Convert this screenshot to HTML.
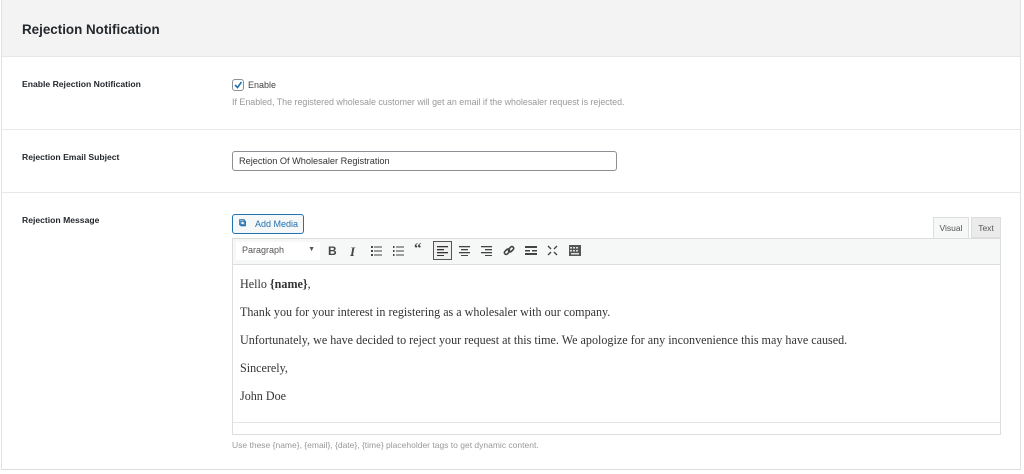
<!DOCTYPE html><html><head><style>
*{margin:0;padding:0;box-sizing:border-box}
body{width:1024px;height:474px;background:#fff;font-family:"Liberation Sans",sans-serif;position:relative;overflow:hidden}
.a{position:absolute}
.lbl{font-size:8.6px;font-weight:bold;color:#23282d;left:22px}
.ser{font-family:"Liberation Serif",serif;font-size:12.1px;color:#333;left:240px}
.ic{position:absolute;top:244px;font-size:11px;color:#444;font-weight:bold}
svg.t{position:absolute;top:245px}
</style></head><body>
<div class="a" style="left:1px;top:0;width:1020px;height:470px;border-left:1px solid #e2e2e2;border-right:1px solid #e2e2e2;border-bottom:1px solid #ddd"></div>
<div class="a" style="left:2px;top:0;width:1018px;height:57px;background:#f3f3f3;border-bottom:1px solid #e6e6e6"></div>
<div class="a" style="left:22px;top:22px;font-size:13.4px;font-weight:bold;color:#23282d">Rejection Notification</div>
<div class="a lbl" style="top:79px">Enable Rejection Notification</div>
<div class="a" style="left:232px;top:79px;width:12px;height:12px;border:1px solid #8c8f94;border-radius:3px;background:#fff"><svg width="10" height="10" style="position:absolute;left:0;top:0"><path d="M2 5 L4.5 7.5 L8.5 2" stroke="#2271b1" stroke-width="1.6" fill="none"/></svg></div>
<div class="a" style="left:248px;top:80px;font-size:9px;color:#444">Enable</div>
<div class="a" style="left:232px;top:97px;font-size:8.9px;color:#999">If Enabled, The registered wholesale customer will get an email if the wholesaler request is rejected.</div>
<div class="a" style="left:2px;top:129px;width:1018px;height:1px;background:#e8e8e8"></div>
<div class="a lbl" style="top:152px">Rejection Email Subject</div>
<div class="a" style="left:232px;top:151px;width:385px;height:20px;border:1px solid #8c8f94;border-radius:3px;font-size:9.2px;color:#333;padding:4px 6px">Rejection Of Wholesaler Registration</div>
<div class="a" style="left:2px;top:192px;width:1018px;height:1px;background:#e8e8e8"></div>
<div class="a lbl" style="top:215px">Rejection Message</div>
<div class="a" style="left:232px;top:214px;width:72px;height:20px;border:1px solid #2271b1;border-radius:3px;background:#f6f7f7;font-size:9px;color:#2271b1;padding:4px 0 0 22px"><span style="position:absolute;left:6px;top:3px;font-size:10px;font-weight:bold">⧉</span>Add Media</div>
<div class="a" style="left:933px;top:217px;width:36px;height:22px;background:#f6f7f7;border:1px solid #ddd;border-bottom:none;font-size:8.5px;color:#555;text-align:center;padding-top:5px">Visual</div>
<div class="a" style="left:971px;top:217px;width:30px;height:21px;background:#ebebeb;border:1px solid #ddd;font-size:8.5px;color:#555;text-align:center;padding-top:5px">Text</div>
<div class="a" style="left:232px;top:238px;width:769px;height:197px;border:1px solid #ddd"></div>
<div class="a" style="left:233px;top:239px;width:767px;height:26px;background:#f6f7f7;border-bottom:1px solid #ddd"></div>
<div class="a" style="left:236px;top:242px;width:84px;height:18px;background:#fff;font-size:9px;color:#555;padding:3px 6px">Paragraph<span style="position:absolute;right:5px;top:4px;font-size:7px">▼</span></div>
<div class="ic" style="left:328px;font-size:12px">B</div>
<div class="ic" style="left:350px;font-style:italic;font-family:'Liberation Serif',serif;font-size:13px">I</div>
<svg class="t" style="left:371px" width="11" height="11"><g fill="#444"><rect x="0" y="1" width="2" height="2"/><rect x="0" y="5" width="2" height="2"/><rect x="0" y="9" width="2" height="2"/><rect x="3" y="1.5" width="8" height="1"/><rect x="3" y="5.5" width="8" height="1"/><rect x="3" y="9.5" width="8" height="1"/></g></svg>
<svg class="t" style="left:393px" width="11" height="11"><g fill="#444"><rect x="0" y="1" width="1.5" height="2"/><rect x="0" y="5" width="1.5" height="2"/><rect x="0" y="9" width="1.5" height="2"/><rect x="3" y="1.5" width="8" height="1"/><rect x="3" y="5.5" width="8" height="1"/><rect x="3" y="9.5" width="8" height="1"/></g></svg>
<div class="ic" style="left:414px;font-size:15px;top:241px;font-family:'Liberation Serif',serif">“</div>
<div class="a" style="left:433px;top:241px;width:19px;height:19px;border:1px solid #555;background:#f0f0f0"></div>
<svg class="t" style="left:437px" width="11" height="11"><g fill="#333"><rect y="1" width="11" height="1.3"/><rect y="4" width="7" height="1.3"/><rect y="7" width="11" height="1.3"/><rect y="10" width="7" height="1"/></g></svg>
<svg class="t" style="left:459px" width="11" height="11"><g fill="#444"><rect y="1" width="11" height="1.3"/><rect x="2" y="4" width="7" height="1.3"/><rect y="7" width="11" height="1.3"/><rect x="2" y="10" width="7" height="1"/></g></svg>
<svg class="t" style="left:481px" width="11" height="11"><g fill="#444"><rect y="1" width="11" height="1.3"/><rect x="4" y="4" width="7" height="1.3"/><rect y="7" width="11" height="1.3"/><rect x="4" y="10" width="7" height="1"/></g></svg>
<svg class="t" style="left:503px" width="12" height="12"><g stroke="#444" stroke-width="1.6" fill="none"><rect x="1" y="5" width="6" height="3.5" rx="1.7" transform="rotate(-45 4 6.7)"/><rect x="5" y="2.5" width="6" height="3.5" rx="1.7" transform="rotate(-45 8 4.2)"/></g></svg>
<svg class="t" style="left:525px" width="12" height="11"><g fill="#444"><rect y="1" width="12" height="2"/><rect y="5" width="5" height="1.5"/><rect x="7" y="5" width="5" height="1.5"/><rect y="8" width="12" height="2"/></g></svg>
<svg class="t" style="left:547px" width="11" height="11"><g stroke="#444" stroke-width="1.4"><path d="M1 1L4 4M10 1L7 4M1 10L4 7M10 10L7 7"/></g></svg>
<svg class="t" style="left:569px" width="12" height="11"><g fill="#555"><rect y="0" width="12" height="11"/></g><g fill="#ddd"><rect x="1" y="2" width="2" height="1.5"/><rect x="4" y="2" width="2" height="1.5"/><rect x="7" y="2" width="2" height="1.5"/><rect x="1" y="5" width="2" height="1.5"/><rect x="4" y="5" width="2" height="1.5"/><rect x="7" y="5" width="2" height="1.5"/><rect x="2" y="8" width="8" height="1.5"/></g></svg>
<div class="a ser" style="top:277px">Hello <b>{name}</b>,</div>
<div class="a ser" style="top:305px">Thank you for your interest in registering as a wholesaler with our company.</div>
<div class="a ser" style="top:333px">Unfortunately, we have decided to reject your request at this time. We apologize for any inconvenience this may have caused.</div>
<div class="a ser" style="top:361px">Sincerely,</div>
<div class="a ser" style="top:389px">John Doe</div>
<div class="a" style="left:233px;top:422px;width:767px;height:1px;background:#e5e5e5"></div>
<div class="a" style="left:232px;top:440px;font-size:8.5px;color:#999">Use these {name}, {email}, {date}, {time} placeholder tags to get dynamic content.</div>
</body></html>
